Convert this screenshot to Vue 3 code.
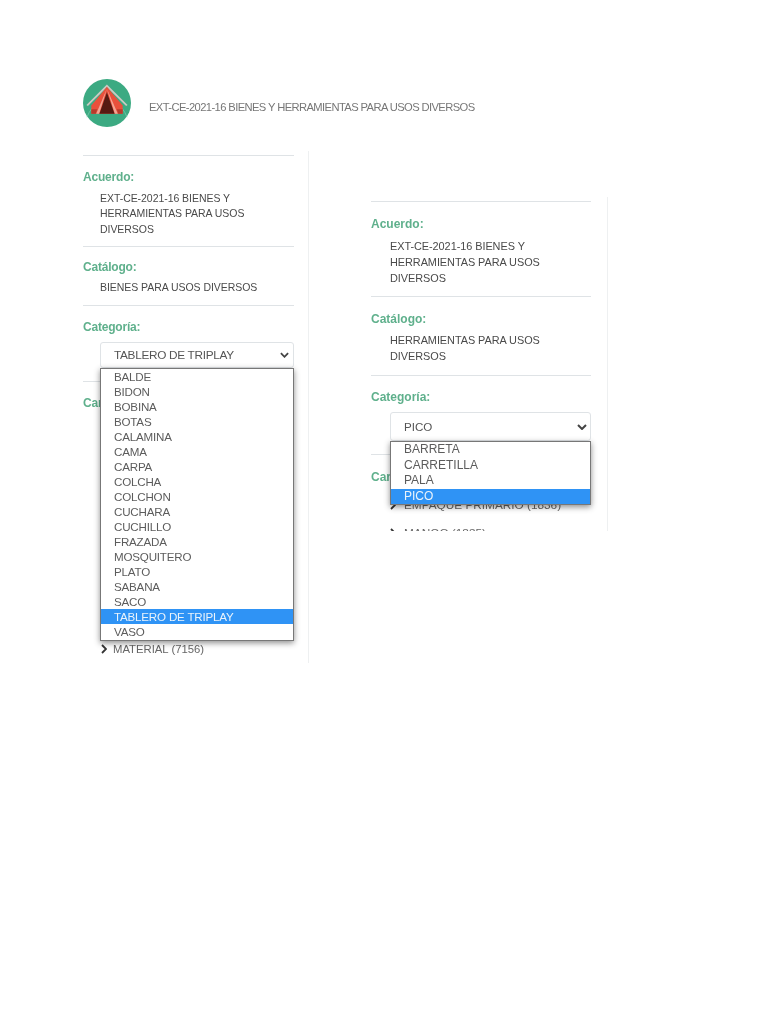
<script setup>
const leftOptions = ['BALDE','BIDON','BOBINA','BOTAS','CALAMINA','CAMA','CARPA','COLCHA','COLCHON','CUCHARA','CUCHILLO','FRAZADA','MOSQUITERO','PLATO','SABANA','SACO','TABLERO DE TRIPLAY','VASO']
const rightOptions = ['BARRETA','CARRETILLA','PALA','PICO']
</script>

<template>
  <div class="page">
    <header class="head">
      <svg class="logo" viewBox="0 0 49 49" width="48" height="48" aria-hidden="true">
        <circle cx="24.5" cy="24.5" r="24.5" fill="#3caa82" />
        <path d="M4 39 Q6 34 9 30 M45 39 Q43 34 40 30" fill="none" stroke="#7fcbb0" stroke-width="0.7" />
        <path d="M3.5 26.5 L24.4 5.5 L45.5 26.5 L44 27.5 L24.4 8.5 L5 27.5 Z" fill="#c9c9c2" />
        <path d="M24.4 8 L8.5 27 V35.5 H40.5 V27 Z" fill="#e9503c" />
        <path d="M8.5 31 H14.5 L13 35.5 H8.5 Z M40.5 31 H34.5 L36 35.5 H40.5 Z" fill="#b63b2c" />
        <path d="M24.4 10 L13.5 35.5 H16.5 Z M24.4 10 L35.5 35.5 H32.5 Z" fill="#f2a595" />
        <path d="M24.4 13.5 L16.8 35.5 H32.2 Z" fill="#571a12" />
      </svg>
      <span class="head-title">EXT-CE-2021-16 BIENES Y HERRAMIENTAS PARA USOS DIVERSOS</span>
    </header>

    <div class="columns">
      <aside class="panel panel-left">
        <section class="sec sec-a">
          <h4 class="lab">Acuerdo:</h4>
          <p class="val">EXT-CE-2021-16 BIENES Y<br />HERRAMIENTAS PARA USOS<br />DIVERSOS</p>
        </section>
        <section class="sec sec-b">
          <h4 class="lab">Catálogo:</h4>
          <p class="val">BIENES PARA USOS DIVERSOS</p>
        </section>
        <section class="sec sec-c">
          <h4 class="lab">Categoría:</h4>
          <div class="select">
            <span>TABLERO DE TRIPLAY</span>
            <svg class="chev" viewBox="0 0 10 6" width="9" height="6" aria-hidden="true"><path d="M1 1 L5 5 L9 1" fill="none" stroke="#444" stroke-width="2" /></svg>
            <ul class="menu">
              <li v-for="o in leftOptions" :key="o" :class="{ on: o === 'TABLERO DE TRIPLAY' }">{{ o }}</li>
            </ul>
          </div>
        </section>
        <section class="sec sec-d">
          <h4 class="lab">Características:</h4>
          <div class="tree">
            <svg viewBox="0 0 6 10" width="6" height="10" aria-hidden="true"><path d="M1 1 L5 5 L1 9" fill="none" stroke="#333" stroke-width="1.8" /></svg>
            <span>MATERIAL (7156)</span>
          </div>
        </section>
      </aside>

      <aside class="panel panel-right">
        <section class="sec sec-a">
          <h4 class="lab">Acuerdo:</h4>
          <p class="val">EXT-CE-2021-16 BIENES Y<br />HERRAMIENTAS PARA USOS<br />DIVERSOS</p>
        </section>
        <section class="sec sec-b">
          <h4 class="lab">Catálogo:</h4>
          <p class="val">HERRAMIENTAS PARA USOS<br />DIVERSOS</p>
        </section>
        <section class="sec sec-c">
          <h4 class="lab">Categoría:</h4>
          <div class="select">
            <span>PICO</span>
            <svg class="chev" viewBox="0 0 10 6" width="10" height="6" aria-hidden="true"><path d="M1 1 L5 5 L9 1" fill="none" stroke="#444" stroke-width="2" /></svg>
            <ul class="menu">
              <li v-for="o in rightOptions" :key="o" :class="{ on: o === 'PICO' }">{{ o }}</li>
            </ul>
          </div>
        </section>
        <section class="sec sec-d">
          <h4 class="lab">Características:</h4>
          <div class="tree">
            <svg viewBox="0 0 6 10" width="6" height="10" aria-hidden="true"><path d="M1 1 L5 5 L1 9" fill="none" stroke="#333" stroke-width="1.8" /></svg>
            <span>EMPAQUE PRIMARIO (1836)</span>
          </div>
          <div class="tree tree-next">
            <svg viewBox="0 0 6 10" width="6" height="10" aria-hidden="true"><path d="M1 1 L5 5 L1 9" fill="none" stroke="#333" stroke-width="1.8" /></svg>
            <span>MANGO (1835)</span>
          </div>
        </section>
      </aside>
    </div>
  </div>
</template>

<style>
html, body { background: #fff; }
</style>

<style scoped>
.page {
  width: 768px;
  height: 1024px;
  box-sizing: border-box;
  padding: 79px 0 0 83px;
  background: #fff;
  font-family: "Liberation Sans", Arial, sans-serif;
  color: #4a4a4a;
  filter: blur(0.45px);
  overflow: hidden;
}
.head { display: flex; align-items: center; height: 48px; }
.logo { flex: none; }
.head-title { margin-left: 18px; padding-top: 8px; font-size: 11.2px; color: #777; letter-spacing: -0.6px; white-space: nowrap; }
.columns { display: flex; align-items: flex-start; margin-top: 24px; }
.panel { box-sizing: border-box; border-right: 1px solid #eef0f1; padding-top: 4px; }
.panel-left { width: 226px; height: 512px; padding-right: 14px; }
.panel-right { width: 237px; height: 334px; margin-left: 62px; margin-top: 46px; padding-right: 16px; overflow: hidden; }
.sec { border-top: 1px solid #dfe3e6; }
.lab { margin: 0; font-size: 12px; letter-spacing: -0.2px; line-height: 16px; font-weight: 700; color: #5fb08c; white-space: nowrap; }
.val { margin: 5.5px 0 0 17px; font-size: 10.5px; line-height: 15.5px; color: #4a4a4a; letter-spacing: -0.05px; white-space: nowrap; }
.select {
  position: relative;
  display: flex;
  align-items: center;
  justify-content: space-between;
  box-sizing: border-box;
  margin: 7px 0 0 17px;
  height: 26px;
  padding: 0 4px 0 13px;
  border: 1px solid #dfe3e6;
  border-radius: 3px;
  background: #fff;
  font-size: 11.8px;
  letter-spacing: -0.3px;
  color: #555;
}
.menu {
  position: absolute;
  z-index: 2;
  top: 100%;
  left: -1px;
  right: -1px;
  margin: 1px 0 0;
  padding: 0 0 1px;
  list-style: none;
  background: #fff;
  border: 1px solid #777;
  box-shadow: 0 2px 6px rgba(0, 0, 0, 0.45);
}
.menu li { height: 15px; line-height: 15px; padding-left: 13px; font-size: 11.6px; letter-spacing: -0.2px; color: #5c5c5c; white-space: nowrap; }
.menu li.on { background: #2f93f5; color: #eaf3fb; }
.tree { display: flex; align-items: center; gap: 6px; margin-left: 18px; font-size: 11.3px; line-height: 16px; color: #666; white-space: nowrap; }

.panel-left .sec-a { padding: 13px 0 8.5px; }
.panel-left .sec-b { padding: 12px 0 9px; }
.panel-left .sec-c { padding: 13px 0 13px; }
.panel-left .sec-d { padding: 13px 0 0; }
.panel-left .tree { margin-top: 230px; }

.panel-right .sec-a { padding: 14px 0 10px; }
.panel-right .sec-b { padding: 14px 0 11px; }
.panel-right .sec-c { padding: 13px 0 13px; }
.panel-right .sec-d { padding: 14px 0 0; }
.panel-right .lab { letter-spacing: 0; }
.panel-right .val { margin: 6px 0 0 19px; font-size: 10.9px; line-height: 16px; }
.panel-right .sec-b .val { margin-top: 5px; }
.panel-right .select { margin-left: 19px; height: 29px; padding: 0 3px 0 13px; font-size: 11.6px; letter-spacing: 0; }
.panel-right .menu { margin-top: 1px; padding: 0; }
.panel-right .menu li { padding-left: 13px; height: 15.5px; line-height: 15.5px; font-size: 12px; letter-spacing: 0; }
.panel-right .tree { margin-top: 12px; margin-left: 19px; gap: 8px; font-size: 11.8px; }
</style>
